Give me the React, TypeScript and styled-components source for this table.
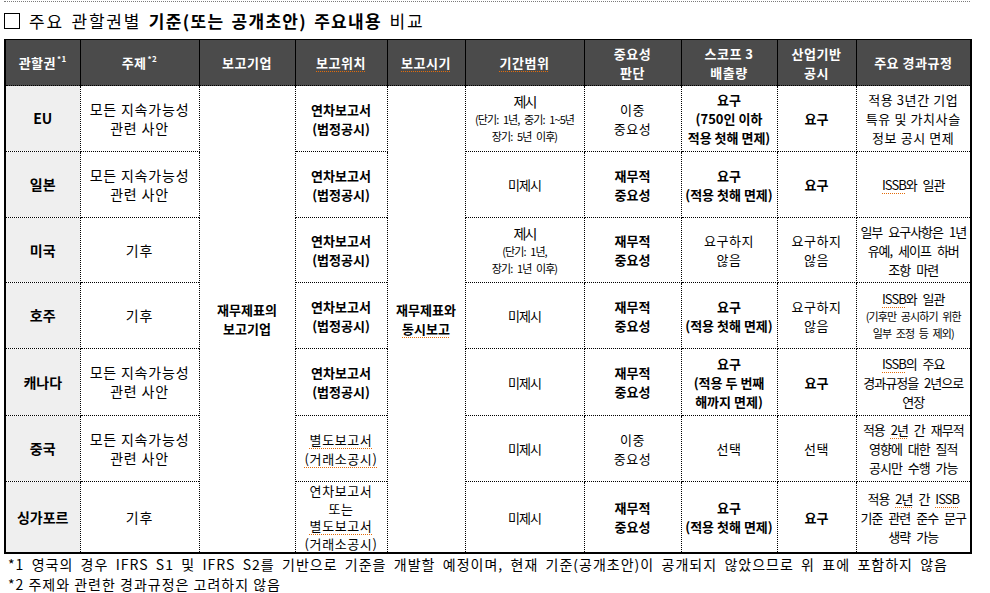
import React from "react"
import styled, { createGlobalStyle } from "styled-components"

const GlobalStyle = createGlobalStyle`
  body {
    margin: 0;
    background: #fff;
    color: #000;
    font-family: "Noto Sans CJK KR", "Noto Sans", sans-serif;
  }
`

type Cell = React.ReactNode

interface Row {
  name: string
  h: number
  topic: Cell
  place: Cell
  placeBold?: boolean
  placeTight?: boolean
  horizon: Cell
  material: Cell
  materialBold?: boolean
  scope3: Cell
  scope3Bold?: boolean
  industry: Cell
  industryBold?: boolean
  relief: Cell
}

const Spell = styled.span`
  text-decoration: underline dotted #e36c0a;
  text-decoration-thickness: 1px;
  text-underline-offset: 3px;
`

const Sup = styled.sup`
  font-size: 8px;
  vertical-align: 6px;
  line-height: 0;
  margin-left: 1px;
`

const Small = styled.span`
  display: block;
  font-size: 11px;
  line-height: 17px;
  letter-spacing: -0.9px;
  word-spacing: 3px;
`

const Tight = styled.span`
  letter-spacing: -1px;
  word-spacing: 4px;
`

const Present = styled.span`
  display: block;
  font-size: 14px;
  line-height: 19px;
  letter-spacing: -2px;
`

const allTopics = (
  <>
    모든 지속가능성
    <br />
    관련 사안
  </>
)

const annual = (
  <>
    연차보고서
    <br />
    (법정공시)
  </>
)

const financial = (
  <>
    재무적
    <br />
    중요성
  </>
)

const notRequired = (
  <>
    요구하지
    <br />
    않음
  </>
)

const firstYear = (
  <>
    요구
    <br />
    (적용 첫해 면제)
  </>
)

const rows: Row[] = [
  {
    name: "EU",
    h: 66,
    topic: allTopics,
    place: annual,
    placeBold: true,
    horizon: (
      <>
        <Present>제시</Present>
        <Small>(단기: 1년, 중기: 1~5년</Small>
        <Small>장기: 5년 이후)</Small>
      </>
    ),
    material: (
      <>
        이중
        <br />
        중요성
      </>
    ),
    scope3: (
      <>
        요구
        <br />
        (750인 이하
        <br />
        적용 첫해 면제)
      </>
    ),
    scope3Bold: true,
    industry: "요구",
    industryBold: true,
    relief: (
      <>
        적용 3년간 기업
        <br />
        특유 및 가치사슬
        <br />
        정보 공시 면제
      </>
    ),
  },
  {
    name: "일본",
    h: 66,
    topic: allTopics,
    place: annual,
    placeBold: true,
    horizon: <Tight>미제시</Tight>,
    material: financial,
    materialBold: true,
    scope3: firstYear,
    scope3Bold: true,
    industry: "요구",
    industryBold: true,
    relief: (
      <Tight>
        <Spell>ISSB</Spell>와 일관
      </Tight>
    ),
  },
  {
    name: "미국",
    h: 65,
    topic: "기후",
    place: annual,
    placeBold: true,
    horizon: (
      <>
        <Present>제시</Present>
        <Small>(단기: 1년,</Small>
        <Small>장기: 1년 이후)</Small>
      </>
    ),
    material: financial,
    materialBold: true,
    scope3: notRequired,
    industry: notRequired,
    relief: (
      <Tight>
        일부 요구사항은 1년
        <br />
        유예, 세이프 하버
        <br />
        조항 마련
      </Tight>
    ),
  },
  {
    name: "호주",
    h: 66,
    topic: "기후",
    place: annual,
    placeBold: true,
    horizon: <Tight>미제시</Tight>,
    material: financial,
    materialBold: true,
    scope3: firstYear,
    scope3Bold: true,
    industry: notRequired,
    relief: (
      <>
        <Tight>
          <Spell>ISSB</Spell>와 일관
        </Tight>
        <Small>(기후만 공시하기 위한</Small>
        <Small>일부 조정 등 제외)</Small>
      </>
    ),
  },
  {
    name: "캐나다",
    h: 67,
    topic: allTopics,
    place: annual,
    placeBold: true,
    horizon: <Tight>미제시</Tight>,
    material: financial,
    materialBold: true,
    scope3: (
      <>
        요구
        <br />
        (적용 두 번째
        <br />
        해까지 면제)
      </>
    ),
    scope3Bold: true,
    industry: "요구",
    industryBold: true,
    relief: (
      <Tight>
        <Spell>ISSB</Spell>의 주요
        <br />
        경과규정을 2년으로
        <br />
        연장
      </Tight>
    ),
  },
  {
    name: "중국",
    h: 66,
    topic: allTopics,
    place: (
      <>
        <Spell>별도보고서</Spell>
        <br />
        <Spell>(거래소공시)</Spell>
      </>
    ),
    horizon: <Tight>미제시</Tight>,
    material: (
      <>
        이중
        <br />
        중요성
      </>
    ),
    scope3: "선택",
    industry: "선택",
    relief: (
      <Tight>
        적용 <Spell>2년</Spell> 간 재무적
        <br />
        영향에 대한 질적
        <br />
        공시만 수행 가능
      </Tight>
    ),
  },
  {
    name: "싱가포르",
    h: 70,
    topic: "기후",
    place: (
      <>
        연차보고서
        <br />
        또는
        <br />
        <Spell>별도보고서</Spell>
        <br />
        <Spell>(거래소공시)</Spell>
      </>
    ),
    placeTight: true,
    horizon: <Tight>미제시</Tight>,
    material: financial,
    materialBold: true,
    scope3: firstYear,
    scope3Bold: true,
    industry: "요구",
    industryBold: true,
    relief: (
      <Tight>
        적용 <Spell>2년</Spell> 간 <Spell>ISSB</Spell>
        <br />
        기준 관련 준수 문구
        <br />
        생략 가능
      </Tight>
    ),
  },
]

const colWidths = [75, 119, 96, 92, 78, 119, 97, 96, 79, 115]

const headers: Cell[] = [
  <>
    관할권<Sup>*1</Sup>
  </>,
  <>
    주제<Sup>*2</Sup>
  </>,
  "보고기업",
  <Spell>보고위치</Spell>,
  <Spell>보고시기</Spell>,
  <Spell>기간범위</Spell>,
  <>
    중요성
    <br />
    판단
  </>,
  <>
    스코프 3
    <br />
    배출량
  </>,
  <>
    산업기반
    <br />
    공시
  </>,
  "주요 경과규정",
]

const Page = styled.div`
  width: 990px;
  height: 593px;
  overflow: hidden;
  padding-left: 4px;
  box-sizing: border-box;
`

const TopRule = styled.div`
  width: 966px;
  margin-top: 1px;
  border-top: 1px dotted #7a7a7a;
`

const Title = styled.h1`
  display: flex;
  align-items: center;
  gap: 9px;
  height: 37px;
  margin: 0;
  font-size: 17px;
  font-weight: 400;
  letter-spacing: 1.8px;
  word-spacing: 2px;

  b {
    font-weight: 700;
    letter-spacing: 1.3px;
  }
`

const CheckBox = styled.span`
  flex: none;
  width: 14px;
  height: 14px;
  border: 1px solid #000;
`

const Table = styled.table`
  width: 966px;
  table-layout: fixed;
  border-collapse: collapse;
  border-left: 2px solid #000;
  border-right: 2px solid #000;
  border-bottom: 2px solid #000;
`

const HeadCell = styled.th`
  height: 45px;
  padding: 0;
  background: #4b4b4b;
  color: #fff;
  border: 1.5px solid #000;
  border-bottom: 1px dotted #000;
  font-size: 13px;
  font-weight: 700;
  line-height: 19px;
  letter-spacing: 0.5px;
`

const BodyRow = styled.tr<{ $h: number }>`
  height: ${(p) => p.$h}px;
`

const Td = styled.td<{ $bold?: boolean; $tight?: boolean }>`
  padding: 0 2px;
  border: 1px dotted #000;
  text-align: center;
  vertical-align: middle;
  font-size: 13px;
  font-weight: ${(p) => (p.$bold ? 700 : 400)};
  line-height: ${(p) => (p.$tight ? 17.5 : 19)}px;
  letter-spacing: ${(p) => (p.$bold ? 0 : 0.6)}px;
  overflow: hidden;
`

const NameCell = styled(Td)`
  background: #efefef;
  font-size: 14px;
  font-weight: 700;
  letter-spacing: 0;
`

const TopicCell = styled(Td)`
  font-size: 14px;
  letter-spacing: 0.8px;
`

const Notes = styled.div`
  width: 940px;
  padding-left: 4px;
  font-size: 14px;
  line-height: 20px;
  letter-spacing: 1px;
`

const NoteLine = styled.p<{ $fill?: boolean }>`
  margin: 0;
  text-align-last: ${(p) => (p.$fill ? "justify" : "auto")};
`

export default function App() {
  return (
    <Page>
      <GlobalStyle />
      <TopRule />
      <Title>
        <CheckBox />
        <span>
          주요 관할권별 <b>기준(또는 공개초안) 주요내용</b> 비교
        </span>
      </Title>
      <Table>
        <colgroup>
          {colWidths.map((w, i) => (
            <col key={i} style={{ width: w }} />
          ))}
        </colgroup>
        <thead>
          <tr>
            {headers.map((h, i) => (
              <HeadCell key={i}>{h}</HeadCell>
            ))}
          </tr>
        </thead>
        <tbody>
          {rows.map((r, i) => (
            <BodyRow key={r.name} $h={r.h}>
              <NameCell>{r.name}</NameCell>
              <TopicCell>{r.topic}</TopicCell>
              {i === 0 && (
                <Td rowSpan={rows.length} $bold>
                  재무제표의
                  <br />
                  보고기업
                </Td>
              )}
              <Td $bold={r.placeBold} $tight={r.placeTight}>
                {r.place}
              </Td>
              {i === 0 && (
                <Td rowSpan={rows.length} $bold>
                  재무제표와
                  <br />
                  <Spell>동시보고</Spell>
                </Td>
              )}
              <Td>{r.horizon}</Td>
              <Td $bold={r.materialBold}>{r.material}</Td>
              <Td $bold={r.scope3Bold}>{r.scope3}</Td>
              <Td $bold={r.industryBold}>{r.industry}</Td>
              <Td>{r.relief}</Td>
            </BodyRow>
          ))}
        </tbody>
      </Table>
      <Notes>
        <NoteLine $fill>
          *1 영국의 경우 IFRS S1 및 IFRS S2를 기반으로 기준을 개발할 예정이며, 현재 기준(공개초안)이 공개되지
          않았으므로 위 표에 포함하지 않음
        </NoteLine>
        <NoteLine>*2 주제와 관련한 경과규정은 고려하지 않음</NoteLine>
      </Notes>
    </Page>
  )
}
